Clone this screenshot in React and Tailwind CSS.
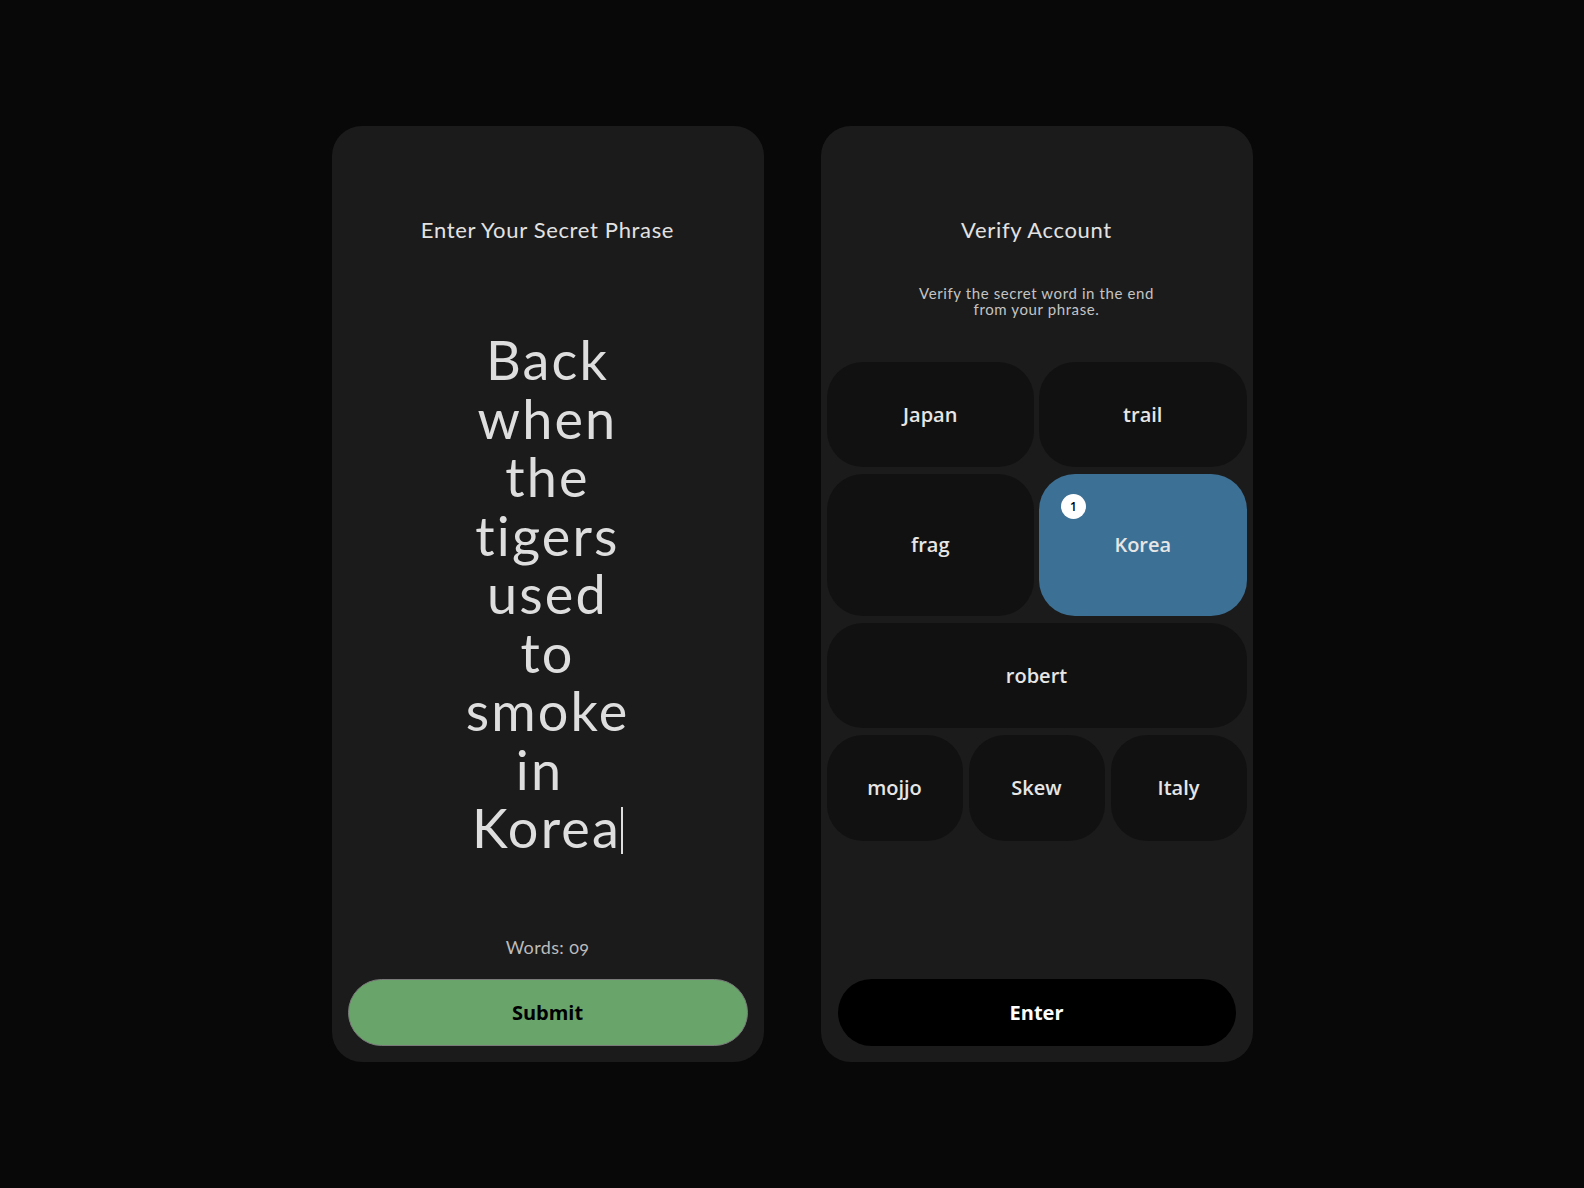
import React from "react";

const phrase = ["Back", "when", "the", "tigers", "used", "to", "smoke", "in\u00a0", "Korea"];

function Tile(props) {
  return (
    <div
      className={
        "relative flex items-center justify-center rounded-[36px] text-[20px] font-semibold text-[#e6e6e6] " +
        (props.active ? "bg-[#3d7095]" : "bg-[#111111]") +
        " " +
        (props.className || "")
      }
      style={{ fontFamily: '"Open Sans", "Noto Sans", sans-serif' }}
    >
      {props.badge && (
        <span className="absolute left-[22px] top-[20px] flex h-[25px] w-[25px] items-center justify-center rounded-full bg-white text-[12px] font-semibold text-black">
          {props.badge}
        </span>
      )}
      {props.label}
    </div>
  );
}

function PhraseCard() {
  return (
    <div className="flex h-[936px] w-[432px] flex-col items-center rounded-[30px] bg-[#1b1b1b] px-4 pb-4 pt-[91px]">
      <h2 className="text-[22px] leading-[26px] tracking-[0.03em] text-[#e2e2e2]">Enter Your Secret Phrase</h2>

      {/* the phrase as typed */}
      <div className="mt-[88px] flex flex-col items-center text-[54px] leading-[58.5px] tracking-[0.04em] text-[#dedede]">
        {phrase.map((w, i) => (
          <span key={i} className="whitespace-pre">
            {w}
            {i === phrase.length - 1 && (
              <span className="inline-block h-[47px] w-[2px] translate-y-[6px] bg-[#dedede]"></span>
            )}
          </span>
        ))}
      </div>

      <div className="mt-auto flex w-full flex-col items-center">
        <p className="text-[18px] leading-[20px] tracking-[0.02em] text-[#bcbcbc] oldstyle-nums">Words: 09</p>
        <button
          className="mt-[22px] h-[67px] w-full rounded-full border-[1.5px] border-[#7a7a7a] bg-[#69a56b] text-[20px] font-bold text-black"
          style={{ fontFamily: '"Open Sans", "Noto Sans", sans-serif' }}
        >
          Submit
        </button>
      </div>
    </div>
  );
}

function VerifyCard() {
  return (
    <div className="flex h-[936px] w-[432px] flex-col items-center rounded-[30px] bg-[#1b1b1b] pb-4 pt-[91px]">
      <h2 className="text-[22px] leading-[26px] tracking-[0.03em] text-[#e2e2e2]">Verify Account</h2>
      <p className="mt-[42px] text-center text-[15px] leading-[16px] tracking-[0.04em] text-[#c4c4c4]">
        Verify the secret word in the end
        <br />
        from your phrase.
      </p>

      <div className="mt-[45px] flex w-full flex-col gap-[7px] px-[6px]">
        <div className="grid h-[105px] grid-cols-2 gap-[5px]">
          <Tile label="Japan" />
          <Tile label="trail" />
        </div>
        <div className="grid h-[142px] grid-cols-2 gap-[5px]">
          <Tile label="frag" />
          <Tile label="Korea" active badge="1" />
        </div>
        <div className="grid h-[105px] grid-cols-1">
          <Tile label="robert" />
        </div>
        <div className="grid h-[106px] grid-cols-3 gap-[6px]">
          <Tile label="mojjo" />
          <Tile label="Skew" />
          <Tile label="Italy" />
        </div>
      </div>

      <div className="mt-auto w-full px-[17px]">
        <button
          className="h-[67px] w-full rounded-full bg-black text-[20px] font-bold text-white"
          style={{ fontFamily: '"Open Sans", "Noto Sans", sans-serif' }}
        >
          Enter
        </button>
      </div>
    </div>
  );
}

export default function App() {
  return (
    <div
      className="flex h-[1188px] w-full items-center justify-center gap-[57px] bg-[#080808]"
      style={{ fontFamily: 'Lato, "Open Sans", sans-serif' }}
    >
      <PhraseCard />
      <VerifyCard />
    </div>
  );
}
